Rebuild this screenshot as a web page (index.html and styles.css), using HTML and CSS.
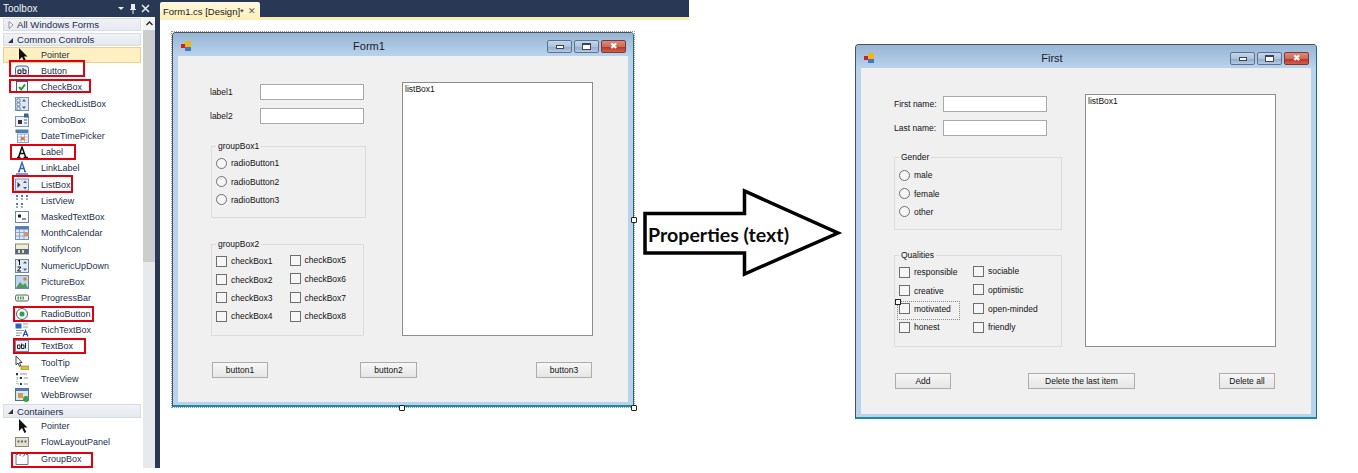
FILE: index.html
```html
<!DOCTYPE html>
<html>

<head>
    <meta charset="utf-8">
    <title>Forms</title>
    <link rel="stylesheet" href="styles.css">
</head>

<body>
    <div class="page">
        <!-- toolbox -->
        <aside class="toolbox">
            <div class="toolbox-title">
                <span class="toolbox-name">Toolbox</span>
                <svg class="title-icons" width="34" height="12" viewBox="0 0 34 12">
                    <path d="M0 4h6l-3 3z" fill="#e8edf4" />
                    <path d="M13 1h4v5h1v1h-2.500v4h-1V7H12V6h1z" fill="#e8edf4" />
                    <path d="M24 2l7 7M31 2l-7 7" stroke="#e8edf4" stroke-width="1.500" />
                </svg>
            </div>
            <div class="toolbox-body">
                <div class="toolbox-list">
                    <div class="tool-header tool-header-first"><svg width="6" height="8" viewBox="0 0 6 8"><path d="M1 0.500l4 3.500-4 3.500z" fill="#fff" stroke="#8a929c" /></svg>All Windows Forms</div>
                    <div class="tool-header"><svg width="6" height="8" viewBox="0 0 6 8"><path d="M0 7l5-5v5z" fill="#333" /></svg>Common Controls</div>

                    <div class="tool tool-active"><svg class="tool-icon" viewBox="0 0 14 14"><path d="M4 0v12l3-3 2.500 5 1.800-1-2.300-4.500h3.500z" fill="#111" /></svg>Pointer</div>
                    <div class="tool"><svg class="tool-icon" viewBox="0 0 14 14"><rect x="0.500" y="2" width="13" height="10" rx="2.500" fill="#e8eef7" stroke="#44618f" /><path d="M3 6h3v3.500H3zM8 4v5.500h3V6H8" fill="none" stroke="#222" /></svg>Button<span class="mark mark-button"></span></div>
                    <div class="tool"><svg class="tool-icon" viewBox="0 0 14 14"><rect x="1.500" y="1.500" width="11" height="11" fill="#fff" stroke="#3d5f8c" /><path d="M4 7l2.200 2.500L10 4.500" fill="none" stroke="#1c9a2c" stroke-width="2" /></svg>CheckBox<span class="mark mark-checkbox"></span></div>
                    <div class="tool"><svg class="tool-icon" viewBox="0 0 14 14"><rect x="0.500" y="0.500" width="13" height="13" fill="#dde6f2" stroke="#7d95b5" /><path d="M2 2h3v3H2zM2 6h3v3H2zM2 10h3v3H2z" fill="#fff" stroke="#3d5f8c" stroke-width="0.700" /><path d="M9 2l2 2.500H7zM9 12l2-2.500H7z" fill="#44618f" /></svg>CheckedListBox</div>
                    <div class="tool"><svg class="tool-icon" viewBox="0 0 14 14"><rect x="0.500" y="3.500" width="13" height="10" fill="#eef2f7" stroke="#7d95b5" /><rect x="9" y="0.500" width="4.500" height="4" fill="#3d5f8c" /><path d="M3 7h4v4H3z" fill="#333" /><path d="M9 7h3M9 10h3" stroke="#44618f" /></svg>ComboBox</div>
                    <div class="tool"><svg class="tool-icon" viewBox="0 0 14 14"><rect x="0.500" y="0.500" width="13" height="3.500" fill="#4f7db5" /><rect x="2.500" y="5" width="11" height="8.500" fill="#fff" stroke="#8aa0bd" /><path d="M2.500 8h11M2.500 11h11M6 5v8M9.500 5v8" stroke="#8aa0bd" stroke-width="0.700" /><rect x="6" y="8" width="3.500" height="3" fill="#d87b4a" /></svg>DateTimePicker</div>
                    <div class="tool"><svg class="tool-icon" viewBox="0 0 14 14"><path d="M2 12.500h3.500M8.500 12.500H13M3.500 12.500L7 2l3.800 10.500M5 8.500h4.500" fill="none" stroke="#111" stroke-width="1.500" /></svg>Label<span class="mark mark-label"></span></div>
                    <div class="tool"><svg class="tool-icon" viewBox="0 0 14 14"><path d="M3 10.500h2M9 10.500h2M4 10.500L7 1.500l3 9M5 7.500h4" fill="none" stroke="#2d62c4" stroke-width="1.400" /><path d="M1 13h12" stroke="#2d62c4" stroke-width="1.300" /></svg>LinkLabel</div>
                    <div class="tool"><svg class="tool-icon" viewBox="0 0 14 14"><rect x="0.500" y="1" width="13" height="12" fill="#e2e9f3" stroke="#7d95b5" /><path d="M2.500 4v6l3-3z" fill="#333" /><path d="M10 2.500l2 2.500H8zM10 11.500L12 9H8z" fill="#44618f" /></svg>ListBox<span class="mark mark-listbox"></span></div>
                    <div class="tool"><svg class="tool-icon" viewBox="0 0 14 14"><path d="M1 1h2v2H1zM6 1h2v2H6zM11 1h2v2h-2zM1 9h2v2H1zM6 9h2v2H6z" fill="#4f7db5" /><path d="M1 5h2M6 5h2M11 5h2M1 13h2M6 13h2" stroke="#555" /></svg>ListView</div>
                    <div class="tool"><svg class="tool-icon" viewBox="0 0 14 14"><rect x="0.500" y="1.500" width="13" height="11" fill="#fff" stroke="#6c86a8" /><path d="M3 4.500h3v3H3z" fill="#222" /><path d="M7 9h4" stroke="#222" /></svg>MaskedTextBox</div>
                    <div class="tool"><svg class="tool-icon" viewBox="0 0 14 14"><rect x="0.500" y="0.500" width="13" height="13" fill="#dfe8f4" stroke="#6c8fc0" /><rect x="0.500" y="0.500" width="13" height="3" fill="#4f7db5" /><path d="M0.500 6.500h13M0.500 10h13M4.500 3.500v10M9 3.500v10" stroke="#6c8fc0" stroke-width="0.700" /><rect x="9" y="6.500" width="4.500" height="3.500" fill="#e0905f" /></svg>MonthCalendar</div>
                    <div class="tool"><svg class="tool-icon" viewBox="0 0 14 14"><rect x="0.500" y="2" width="13" height="10" fill="#f4ecd0" stroke="#8a8a6a" /><rect x="0.500" y="7" width="13" height="5" fill="#50659a" /><path d="M3 8h2v3H3zM7 8h2v3H7z" fill="#f0e080" /></svg>NotifyIcon</div>
                    <div class="tool"><svg class="tool-icon" viewBox="0 0 14 14"><rect x="0.500" y="0.500" width="13" height="13" fill="#e2e9f3" stroke="#6c86a8" /><path d="M3 2l1.500-1v5M2.500 8h3.500l-3.500 4H6" fill="none" stroke="#111" /><path d="M10 2l2 2.500H8zM10 12l2-2.500H8z" fill="#44618f" /></svg>NumericUpDown</div>
                    <div class="tool"><svg class="tool-icon" viewBox="0 0 14 14"><rect x="0.500" y="0.500" width="13" height="13" fill="#bcd6ee" stroke="#6c86a8" /><path d="M1 13l4-6 3 3 2-2 3 5z" fill="#4f9a58" /><circle cx="10" cy="4" r="1.800" fill="#e87a3a" /></svg>PictureBox</div>
                    <div class="tool"><svg class="tool-icon" viewBox="0 0 14 14"><rect x="0.500" y="4" width="13" height="6" rx="1.500" fill="#f4f4f4" stroke="#666" /><path d="M2.500 5.500h1.500v3H2.500zM5 5.500h1.500v3H5zM7.500 5.500H9v3H7.500z" fill="#3fb04a" /></svg>ProgressBar</div>
                    <div class="tool"><svg class="tool-icon" viewBox="0 0 14 14"><circle cx="7" cy="7" r="5.500" fill="#f4f8fb" stroke="#3d6a78" /><circle cx="7" cy="7" r="2.500" fill="#2fa03c" /></svg>RadioButton<span class="mark mark-radio"></span></div>
                    <div class="tool"><svg class="tool-icon" viewBox="0 0 14 14"><rect x="0.500" y="0.500" width="6" height="5" fill="#2d62c4" /><path d="M8 1h5M8 4h5M1 7.500h8M1 10h6M1 12.500h4" stroke="#8a98aa" /><path d="M8 13.500l2.500-6 2.500 6M9 11.500h3" fill="none" stroke="#1f4fa8" stroke-width="1.200" /></svg>RichTextBox</div>
                    <div class="tool"><svg class="tool-icon" viewBox="0 0 14 14"><rect x="0.500" y="1.500" width="13" height="11" fill="#eaf0f7" stroke="#6c86a8" /><path d="M2.500 6h2.500v3.500H2.500zM6.500 4.500v5H9V6H6.500M10.500 4v5.500" fill="none" stroke="#222" /></svg>TextBox<span class="mark mark-textbox"></span></div>
                    <div class="tool"><svg class="tool-icon" viewBox="0 0 14 14"><path d="M1 0v9l2-2 1.500 3.500 1.200-.7L4.500 6.500H7z" fill="#fff" stroke="#111" stroke-width="0.800" /><rect x="6" y="10" width="8" height="4" fill="#d8c038" stroke="#8a7a20" stroke-width="0.600" /></svg>ToolTip</div>
                    <div class="tool"><svg class="tool-icon" viewBox="0 0 14 14"><path d="M1 1h2v2H1zM5 5h2v2H5zM5 11h2v2H5z" fill="#333" /><path d="M2 3v9h3M2 6h3" fill="none" stroke="#8a98aa" stroke-dasharray="1 1" /><path d="M5 2h7M9 6h4M9 12h4" stroke="#8a98aa" /></svg>TreeView</div>
                    <div class="tool"><svg class="tool-icon" viewBox="0 0 14 14"><rect x="0.500" y="0.500" width="13" height="12" fill="#dbe6f3" stroke="#4f6f9a" /><rect x="0.500" y="0.500" width="13" height="2.500" fill="#4f7db5" /><rect x="3" y="5" width="5" height="5" fill="#d89a4a" /><circle cx="11" cy="11" r="3" fill="#3fa04a" /></svg>WebBrowser</div>

                    <div class="tool-header tool-header-next"><svg width="6" height="8" viewBox="0 0 6 8"><path d="M0 7l5-5v5z" fill="#333" /></svg>Containers</div>
                    <div class="tool"><svg class="tool-icon" viewBox="0 0 14 14"><path d="M4 0v12l3-3 2.500 5 1.800-1-2.300-4.500h3.500z" fill="#111" /></svg>Pointer</div>
                    <div class="tool"><svg class="tool-icon" viewBox="0 0 14 14"><rect x="0.500" y="2.500" width="13" height="9" fill="#e6e0c8" stroke="#8a8a7a" /><path d="M2.500 5.500h2v2h-2zM6 5.500h2v2H6zM9.500 5.500h2v2h-2z" fill="#50659a" /></svg>FlowLayoutPanel</div>
                    <div class="tool"><svg class="tool-icon" viewBox="0 0 14 14"><path d="M3 2.500H1v10h12v-10h-2" fill="#fbfbfb" stroke="#777" /><path d="M4 1h2l-1 2v1M8 1l2 1.500L8 4.500" fill="none" stroke="#2d62c4" /></svg>GroupBox<span class="mark mark-groupbox"></span></div>
                </div>
                <div class="scrollbar">
                    <div class="scroll-up"><svg width="7" height="5" viewBox="0 0 7 5"><path d="M0.500 4l3-3 3 3" fill="none" stroke="#222" stroke-width="1.300" /></svg></div>
                    <div class="scroll-thumb"></div>
                </div>
            </div>
        </aside>

        <main class="workspace">
            <div class="tabstrip">
                <div class="tab">Form1.cs [Design]*<span class="tab-close">✕</span></div>
            </div>
            <div class="canvas">
                <!-- designer form -->
                <div class="selection">
                    <section class="window window-first">
                        <header class="titlebar">
                            <svg class="app-icon" viewBox="0 0 10 10"><rect x="0" y="3" width="4" height="4" fill="#c8232c" /><rect x="4" y="0" width="6" height="6" fill="#f2b711" /><rect x="4" y="6" width="6" height="4" fill="#3f78c9" /></svg>
                            <span class="window-title">Form1</span>
                            <div class="window-buttons">
                                <span class="win-btn"><i class="glyph-min"></i></span>
                                <span class="win-btn"><i class="glyph-max"></i></span>
                                <span class="win-btn win-close">✖</span>
                            </div>
                        </header>
                        <div class="client">
                            <div class="client-main">
                                <div class="fields">
                                    <div class="field"><label class="field-label">label1</label><span class="textbox"></span></div>
                                    <div class="field"><label class="field-label">label2</label><span class="textbox"></span></div>
                                    <div class="group group-radio">
                                        <span class="group-title">groupBox1</span>
                                        <div class="option"><span class="radio"></span>radioButton1</div>
                                        <div class="option"><span class="radio"></span>radioButton2</div>
                                        <div class="option"><span class="radio"></span>radioButton3</div>
                                    </div>
                                    <div class="group group-check">
                                        <span class="group-title">groupBox2</span>
                                        <div class="check-col">
                                            <div class="option"><span class="check"></span>checkBox1</div>
                                            <div class="option"><span class="check"></span>checkBox2</div>
                                            <div class="option"><span class="check"></span>checkBox3</div>
                                            <div class="option"><span class="check"></span>checkBox4</div>
                                        </div>
                                        <div class="check-col check-col-right">
                                            <div class="option"><span class="check"></span>checkBox5</div>
                                            <div class="option"><span class="check"></span>checkBox6</div>
                                            <div class="option"><span class="check"></span>checkBox7</div>
                                            <div class="option"><span class="check"></span>checkBox8</div>
                                        </div>
                                    </div>
                                </div>
                                <div class="listbox">listBox1</div>
                            </div>
                            <div class="actions">
                                <button class="action action-one">button1</button>
                                <button class="action action-two">button2</button>
                                <button class="action action-three">button3</button>
                            </div>
                        </div>
                    </section>
                    <span class="handle handle-right"></span>
                    <span class="handle handle-bottom"></span>
                    <span class="handle handle-corner"></span>
                </div>

                <!-- arrow -->
                <svg class="arrow" width="202" height="90" viewBox="0 0 202 90">
                    <path d="M4 25.500H103.500V3L197 45L103.500 86V65H4Z" fill="#fff" stroke="#000" stroke-width="3.500" />
                    <text class="arrow-text" x="7" y="54">Properties (text)</text>
                </svg>

                <!-- finished form -->
                <section class="window window-second">
                    <header class="titlebar">
                        <svg class="app-icon" viewBox="0 0 10 10"><rect x="0" y="3" width="4" height="4" fill="#c8232c" /><rect x="4" y="0" width="6" height="6" fill="#f2b711" /><rect x="4" y="6" width="6" height="4" fill="#3f78c9" /></svg>
                        <span class="window-title">First</span>
                        <div class="window-buttons">
                            <span class="win-btn"><i class="glyph-min"></i></span>
                            <span class="win-btn"><i class="glyph-max"></i></span>
                            <span class="win-btn win-close">✖</span>
                        </div>
                    </header>
                    <div class="client">
                        <div class="client-main">
                            <div class="fields">
                                <div class="field"><label class="field-label">First name:</label><span class="textbox"></span></div>
                                <div class="field"><label class="field-label">Last name:</label><span class="textbox"></span></div>
                                <div class="group group-radio">
                                    <span class="group-title">Gender</span>
                                    <div class="option"><span class="radio"></span>male</div>
                                    <div class="option"><span class="radio"></span>female</div>
                                    <div class="option"><span class="radio"></span>other</div>
                                </div>
                                <div class="group group-check">
                                    <span class="group-title">Qualities</span>
                                    <div class="check-col">
                                        <div class="option"><span class="check"></span>responsible</div>
                                        <div class="option"><span class="check"></span>creative</div>
                                        <div class="option option-selected"><span class="check"></span>motivated</div>
                                        <div class="option"><span class="check"></span>honest</div>
                                    </div>
                                    <div class="check-col check-col-right">
                                        <div class="option"><span class="check"></span>sociable</div>
                                        <div class="option"><span class="check"></span>optimistic</div>
                                        <div class="option"><span class="check"></span>open-minded</div>
                                        <div class="option"><span class="check"></span>friendly</div>
                                    </div>
                                </div>
                            </div>
                            <div class="listbox">listBox1</div>
                        </div>
                        <div class="actions">
                            <button class="action action-one">Add</button>
                            <button class="action action-two">Delete the last item</button>
                            <button class="action action-three">Delete all</button>
                        </div>
                    </div>
                </section>
            </div>
        </main>
    </div>
</body>

</html>
```

FILE: styles.css
```css
* {
    margin: 0;
    padding: 0;
    box-sizing: border-box;
}

body {
    background-color: #fff;
    font-family: "Liberation Sans", Arial, sans-serif;
    font-size: 9px;
    color: #111;
    overflow: hidden;
}

.page {
    display: flex;
    align-items: flex-start;
    width: 1358px;
    height: 473px;
}

/* toolbox */
.toolbox {
    flex: none;
    width: 160px;
    height: 468px;
    background-color: #293955;
}

.toolbox-title {
    display: flex;
    align-items: center;
    justify-content: space-between;
    width: 155px;
    height: 17px;
    padding: 0 3px;
    color: #eef2f8;
    font-size: 10px;
}

.toolbox-body {
    display: flex;
    width: 155px;
    height: 451px;
    background-color: #f4f5f7;
}

.toolbox-list {
    width: 143px;
    padding: 1px 2px 0 3px;
    background-color: #fff;
    color: #1e2f4a;
}

.tool-header {
    display: flex;
    align-items: center;
    gap: 3px;
    height: 13px;
    margin-top: 2px;
    padding-left: 4px;
    background: linear-gradient(#f0f2f6, #e6e9f0);
    border: 1px solid #d8dce5;
    font-size: 9.600px;
}

.tool-header-first {
    margin-top: 0;
}

.tool-header-next {
    height: 14px;
    margin-top: 1px;
}

.tool {
    position: relative;
    display: flex;
    align-items: center;
    gap: 12px;
    height: 16.2px;
    padding-left: 12px;
}

.tool-active {
    margin-top: 1px;
    background-color: #fff0c4;
    border: 1px solid #ecd288;
    padding-left: 11px;
}

.tool-icon {
    flex: none;
    width: 14px;
    height: 14px;
}

.mark {
    position: absolute;
    border: 2px solid #e2000e;
}

.mark-button {
    left: 6px;
    width: 76px;
    top: -3px;
    height: 17px;
}

.mark-checkbox {
    left: 6px;
    width: 82px;
    top: 0;
    height: 14px;
}

.mark-label {
    left: 7px;
    width: 66px;
    top: 0;
    height: 16px;
}

.mark-listbox {
    left: 9px;
    width: 61px;
    top: -2px;
    height: 18px;
}

.mark-radio {
    left: 10px;
    width: 81px;
    top: 0;
    height: 16px;
}

.mark-textbox {
    left: 10px;
    width: 73px;
    top: 0;
    height: 16px;
}

.mark-groupbox {
    left: 8px;
    width: 82px;
    top: 1px;
    height: 16px;
}

.scrollbar {
    width: 12px;
    background-color: #e8e9ec;
}

.scroll-up {
    display: flex;
    align-items: center;
    justify-content: center;
    height: 13px;
    background-color: #f2f3f5;
}

.scroll-thumb {
    height: 232px;
    background-color: #cdcdcd;
}

/* workspace */
.workspace {
    flex: 1;
}

.tabstrip {
    width: 529px;
    height: 20px;
    padding-top: 2px;
    background-color: #293955;
    border-bottom: 3px solid #fbeeb4;
}

.tab {
    display: flex;
    align-items: center;
    justify-content: space-between;
    width: 100px;
    height: 18px;
    padding: 0 4px 0 3px;
    background: linear-gradient(#fff8e0, #fdeeb6);
    border-radius: 2px 2px 0 0;
    color: #1a1a1a;
    font-size: 9.500px;
}

.tab-close {
    font-size: 9px;
    color: #555;
}

.canvas {
    display: flex;
    align-items: flex-start;
    padding: 12px 0 0 12px;
}

.selection {
    position: relative;
    flex: none;
    outline: 1px dotted #999;
}

.handle {
    position: absolute;
    width: 6px;
    height: 6px;
    background-color: #fff;
    border: 1px solid #222;
    border-radius: 1px;
}

.handle-right {
    right: -3px;
    top: 185px;
}

.handle-bottom {
    left: 227px;
    bottom: -4px;
}

.handle-corner {
    right: -3px;
    bottom: -4px;
}

.arrow {
    flex: none;
    margin: 156px 0 0 7px;
}

.arrow-text {
    font-family: Lato, "Liberation Sans", sans-serif;
    font-weight: 700;
    font-size: 19.600px;
    fill: #0b0b0b;
}

/* window */
.window {
    flex: none;
    width: 462px;
    height: 375px;
    padding: 0 5px 4px;
    background-color: #b9d3ec;
    border: 1px solid #48525c;
    border-right-color: #1d6b7c;
    border-bottom: 2px solid #1c8aa0;
    border-radius: 4px 4px 0 0;
}

.window-second {
    margin: 12px 0 0 12px;
}

.titlebar {
    display: flex;
    align-items: center;
    height: 23px;
    margin: 0 -5px;
    padding: 3px 7px 0 8px;
    background: linear-gradient(#98b5d4, #b9d3ec);
    border-radius: 3px 3px 0 0;
}

.app-icon {
    flex: none;
    width: 10px;
    height: 10px;
}

.window-title {
    flex: 1;
    text-align: center;
    font-size: 11px;
    color: #18222e;
}

.window-buttons {
    display: flex;
    gap: 2px;
}

.win-btn {
    display: flex;
    align-items: center;
    justify-content: center;
    width: 25px;
    height: 13px;
    background: linear-gradient(#c4d6ea 0, #adc4de 50%, #8fa9c8 51%, #b4cae2 100%);
    border: 1px solid #5d7290;
    border-radius: 2px;
}

.win-close {
    background: linear-gradient(#dc8a7c 0, #cf6a5a 50%, #b8301f 51%, #cc6252 100%);
    border-color: #7c3a32;
    color: #fff;
    font-size: 9px;
    line-height: 1;
}

.glyph-min {
    width: 8px;
    height: 4px;
    margin-top: 2px;
    background-color: #fff;
    border: 1px solid #39455a;
}

.glyph-max {
    width: 9px;
    height: 7px;
    background-color: #fff;
    border: 1px solid #39455a;
    border-top-width: 2px;
}

.client {
    width: 450px;
    height: 346px;
    padding: 26px 0 0 33px;
    background-color: #f0f0f0;
    font-size: 8.500px;
}

.client-main {
    display: flex;
}

.fields {
    width: 191px;
    padding-top: 2px;
}

.field {
    display: flex;
    align-items: center;
    height: 16px;
    margin-bottom: 8px;
}

.field-label {
    width: 49px;
}

.window-first .field-label {
    margin-left: -1px;
    width: 50px;
}

.textbox {
    width: 104px;
    height: 16px;
    background-color: #fff;
    border: 1px solid #a9a9a9;
}

.group {
    position: relative;
    border: 1px solid #dcdcdc;
}

.group-title {
    position: absolute;
    left: 4px;
    top: -6px;
    padding: 0 2px;
    background-color: #f0f0f0;
    line-height: 11px;
}

.group-radio {
    width: 155px;
    height: 72px;
    margin-top: 22px;
    padding: 7px 0 0 4px;
}

.group-check {
    display: flex;
    width: 153px;
    height: 92px;
    margin-top: 26px;
    padding: 7px 0 0 4px;
}

.window-second .group {
    width: 168px;
}

.window-second .group-radio {
    height: 73px;
    margin-top: 21px;
    padding-top: 8px;
}

.window-second .group-check {
    margin-top: 25px;
}

.option {
    position: relative;
    display: flex;
    align-items: center;
    gap: 4px;
    height: 18.400px;
}

.check-col {
    width: 74px;
}

.check-col-right {
    margin-top: -1px;
}

.check-col-right .option:nth-child(3) {
    margin-top: 1px;
}

.radio {
    flex: none;
    width: 11px;
    height: 11px;
    background-color: #f6f6f6;
    border: 1px solid #6f6f6f;
    border-radius: 50%;
}

.check {
    flex: none;
    width: 11px;
    height: 11px;
    background-color: #f6f6f6;
    border: 1px solid #6f6f6f;
}

.option-selected::before {
    content: "";
    position: absolute;
    left: -2px;
    top: 1px;
    width: 61px;
    height: 17px;
    border: 1px dotted #8a8a8a;
}

.option-selected::after {
    content: "";
    position: absolute;
    left: -4px;
    top: -1px;
    width: 4px;
    height: 4px;
    background-color: #fff;
    border: 1px solid #222;
}

.listbox {
    width: 191px;
    height: 254px;
    padding: 1px 2px;
    background-color: #fff;
    border: 1px solid #8c8c8c;
}

.window-second .listbox {
    height: 253px;
}

.actions {
    display: flex;
    margin-top: 26px;
    padding-left: 1px;
}

.action {
    flex: none;
    width: 56px;
    height: 16px;
    background: linear-gradient(#f6f6f6, #e6e6e6);
    border: 1px solid #adadad;
    font: inherit;
    color: #111;
}

.action-two {
    width: 57px;
    margin-left: 92px;
}

.action-three {
    margin-left: 119px;
}

.window-second .action-two {
    width: 107px;
    margin-left: 77px;
}

.window-second .action-three {
    margin-left: 84px;
}
```
